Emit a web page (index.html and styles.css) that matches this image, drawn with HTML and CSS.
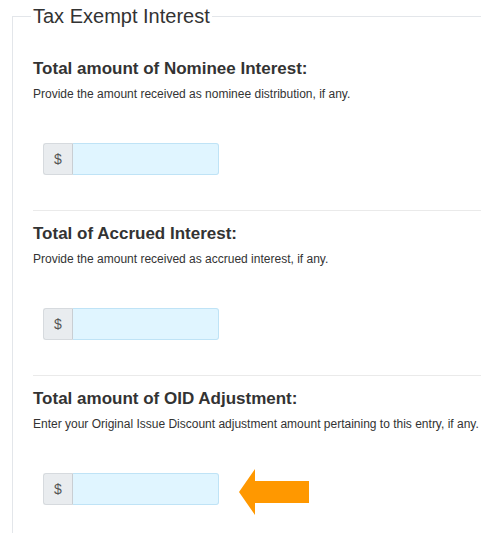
FILE: index.html
```html
<!DOCTYPE html>
<html lang="en">
<head>
    <meta charset="UTF-8">
    <meta name="viewport" content="width=device-width, initial-scale=1.0">
    <title>Tax Exempt Interest</title>
    <link rel="stylesheet" href="styles.css">
</head>
<body>
    <fieldset class="group">
        <legend>Tax Exempt Interest</legend>

        <div class="entry">
            <h3>Total amount of Nominee Interest:</h3>
            <p>Provide the amount received as nominee distribution, if any.</p>
            <div class="entry-row">
                <div class="money">
                    <span class="money-sign">$</span>
                    <input type="text" class="money-input">
                </div>
            </div>
        </div>

        <div class="entry">
            <h3>Total of Accrued Interest:</h3>
            <p>Provide the amount received as accrued interest, if any.</p>
            <div class="entry-row">
                <div class="money">
                    <span class="money-sign">$</span>
                    <input type="text" class="money-input">
                </div>
            </div>
        </div>

        <div class="entry">
            <h3>Total amount of OID Adjustment:</h3>
            <p>Enter your Original Issue Discount adjustment amount pertaining to this entry, if any.</p>
            <div class="entry-row">
                <div class="money">
                    <span class="money-sign">$</span>
                    <input type="text" class="money-input">
                </div>
                <!-- pointer to the field that needs attention -->
                <svg class="hint-arrow" width="70" height="46" viewBox="0 0 70 46">
                    <polygon points="0,23 16,0 16,12 70,12 70,34 16,34 16,46" fill="#ff9800"/>
                </svg>
            </div>
        </div>
    </fieldset>
</body>
</html>
```

FILE: styles.css
```css
html, body {
    overflow-x: hidden;
}

body {
    font-family: "Liberation Sans", Arial, sans-serif;
    margin: 0;
    padding: 0;
    background-color: #fff;
    color: #333;
}

.group {
    margin: 5px -40px 0 12px;
    padding: 18px 0 0 20px;
    border: 1px solid #e3e6ea;
    border-right: none;
    border-bottom: none;
}

.group legend {
    font-size: 20px;
    font-weight: normal;
    color: #333;
    padding: 0 2px;
    margin-left: -2px;
}

.entry {
    padding: 13px 0 35px 0;
    border-bottom: 1px solid #eaeaea;
}

.entry h3 {
    font-size: 17px;
    line-height: 20px;
    font-weight: bold;
    margin: 0 0 7px 0;
    color: #333;
}

.entry p {
    font-size: 12px;
    line-height: 17px;
    margin: 0 0 40px 0;
    color: #333;
}

.entry-row {
    display: flex;
    align-items: flex-start;
    gap: 20px;
    padding-left: 10px;
}

.money {
    display: flex;
    height: 32px;
}

.money-sign {
    width: 30px;
    display: flex;
    align-items: center;
    justify-content: center;
    background-color: #e9ecef;
    border: 1px solid #d6dade;
    border-right: 1px solid #c9ced3;
    border-radius: 3px 0 0 3px;
    color: #555;
    font-size: 14px;
    box-sizing: border-box;
}

.money-input {
    width: 146px;
    height: 32px;
    box-sizing: border-box;
    border: 1px solid #bfe3f6;
    border-left: none;
    border-radius: 0 3px 3px 0;
    background-color: #e0f5ff;
    padding: 0 8px;
    font-size: 14px;
    outline: none;
}

.hint-arrow {
    margin-top: -4px;
    margin-bottom: -10px;
}
```
